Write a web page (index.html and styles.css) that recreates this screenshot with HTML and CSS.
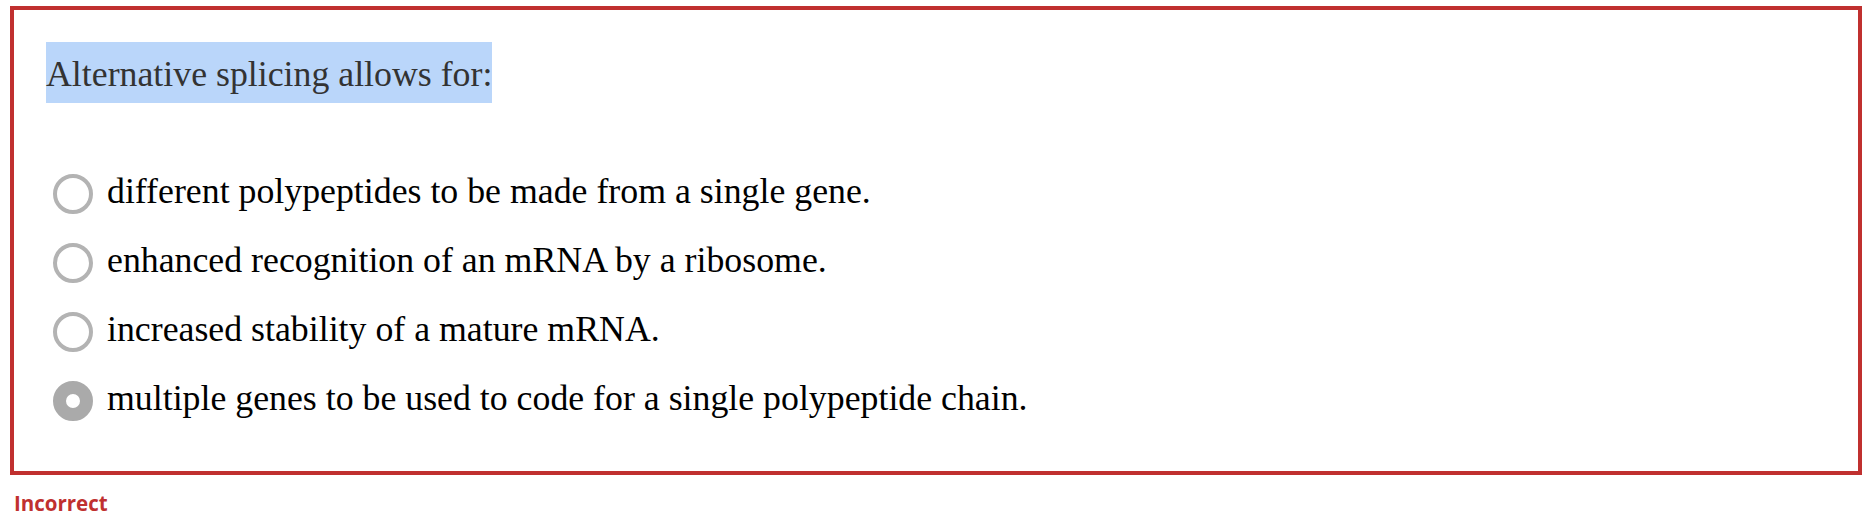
FILE: index.html
```html
<!DOCTYPE html>
<html>
<head>
<meta charset="utf-8">
<link rel="stylesheet" href="styles.css">
</head>
<body>
<div class="page">
  <div class="question-box">
    <div class="question"><span class="question-text">Alternative splicing allows for:</span></div>
    <ul class="options">
      <li class="option"><span class="radio"></span><span class="label">different polypeptides to be made from a single gene.</span></li>
      <li class="option"><span class="radio"></span><span class="label">enhanced recognition of an mRNA by a ribosome.</span></li>
      <li class="option"><span class="radio"></span><span class="label">increased stability of a mature mRNA.</span></li>
      <li class="option"><span class="radio checked"></span><span class="label">multiple genes to be used to code for a single polypeptide chain.</span></li>
    </ul>
  </div>
  <div class="feedback">Incorrect</div>
</div>
</body>
</html>
```

FILE: styles.css
```css
html, body {
  margin: 0;
  padding: 0;
  background: #ffffff;
}
.page {
  padding: 6px 4px 0 10px;
}
.question-box {
  border: 4px solid #c0302f;
  padding: 32px 32px 35px 32px;
  height: 469px;
  box-sizing: border-box;
}
.question {
  height: 61px;
}
.question-text {
  display: inline-block;
  background: #bad6fa;
  color: #333333;
  font-family: "Liberation Serif", "Times New Roman", serif;
  font-size: 35.8px;
  line-height: 57px;
  padding-top: 4px;
}
.options {
  list-style: none;
  margin: 56px 0 0 0;
  padding: 0 0 0 7px;
}
.option {
  display: flex;
  align-items: center;
  height: 69px;
  gap: 14px;
}
.radio {
  flex: none;
  width: 40px;
  height: 40px;
  border: 4px solid #b3b3b3;
  border-radius: 50%;
  box-sizing: border-box;
  background: #ffffff;
}
.radio.checked {
  border: 13px solid #aaaaaa;
}
.label {
  font-family: "Liberation Serif", "Times New Roman", serif;
  font-size: 35.8px;
  color: #000000;
  position: relative;
  top: -3px;
}
.feedback {
  font-family: "Open Sans", sans-serif;
  font-weight: 700;
  font-size: 20.5px;
  color: #c0302f;
  padding: 14px 0 0 4px;
}
```
